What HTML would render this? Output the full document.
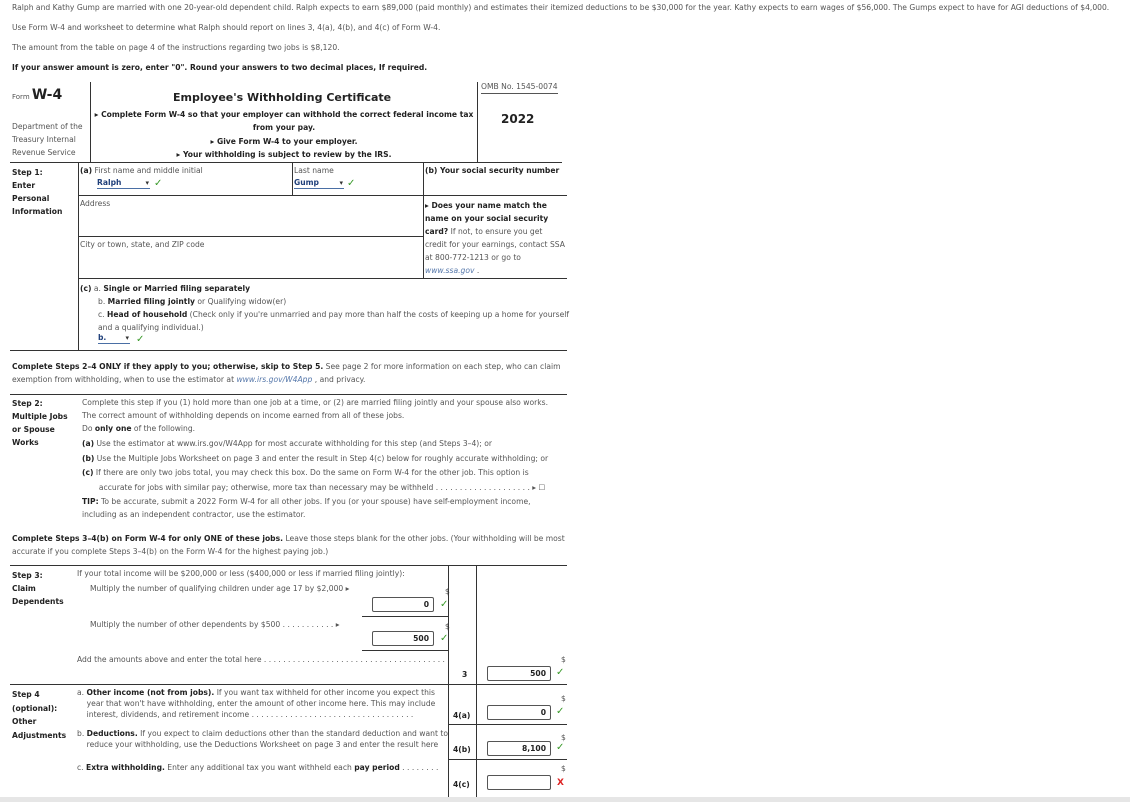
<!DOCTYPE html>
<html><head><meta charset="utf-8"><style>
*{margin:0;padding:0;box-sizing:border-box}
body{width:1130px;height:802px;background:#fff;position:relative;overflow:hidden;font-family:"DejaVu Sans","Liberation Sans",sans-serif;font-size:7.6px;color:#555}
.a{position:absolute;white-space:nowrap;line-height:10px}
b{color:#222}
.k{color:#222;font-weight:bold}
.h{position:absolute;height:1px;background:#333}
.v{position:absolute;width:1px;background:#333}
.lk{color:#5577aa;font-style:italic}
.sel{position:absolute;height:11px;border-bottom:1px solid #4a6fa5;color:#1f3f7a;font-weight:bold;font-size:7.6px;line-height:10px}
.sel:after{content:"▾";position:absolute;right:1px;top:0;font-size:7px;color:#333}
.ck{position:absolute;color:#3a9a2a;font-weight:bold;font-size:10px;line-height:10px}
.box{position:absolute;height:15px;border:1px solid #555;border-radius:2px;text-align:right;padding-right:4px;color:#222;font-weight:bold;line-height:13px}
</style></head><body>
<div class="a" style="left:12px;top:3px">Ralph and Kathy Gump are married with one 20-year-old dependent child. Ralph expects to earn $89,000 (paid monthly) and estimates their itemized deductions to be $30,000 for the year. Kathy expects to earn wages of $56,000. The Gumps expect to have for AGI deductions of $4,000.</div>
<div class="a" style="left:12px;top:23px">Use Form W-4 and worksheet to determine what Ralph should report on lines 3, 4(a), 4(b), and 4(c) of Form W-4.</div>
<div class="a" style="left:12px;top:43px">The amount from the table on page 4 of the instructions regarding two jobs is $8,120.</div>
<div class="a k" style="left:12px;top:63px">If your answer amount is zero, enter "0". Round your answers to two decimal places, If required.</div>

<div class="a" style="left:12px;top:90px;font-size:7px">Form <span style="font-size:14px;font-weight:bold;color:#222">W-4</span></div>
<div class="a" style="left:12px;top:122px">Department of the</div>
<div class="a" style="left:12px;top:135px">Treasury Internal</div>
<div class="a" style="left:12px;top:148px">Revenue Service</div>
<div class="v" style="left:90px;top:82px;height:81px"></div>
<div class="a k" style="left:173px;top:91px;font-size:11px;line-height:14px">Employee's Withholding Certificate</div>
<div class="a k" style="left:91px;top:108px;width:386px;text-align:center;line-height:13.3px">▸ Complete Form W-4 so that your employer can withhold the correct federal income tax<br>from your pay.<br>▸ Give Form W-4 to your employer.<br>▸ Your withholding is subject to review by the IRS.</div>
<div class="v" style="left:477px;top:82px;height:81px"></div>
<div class="a" style="left:481px;top:82px;border-bottom:1px solid #555;padding-bottom:1px">OMB No. 1545-0074</div>
<div class="a k" style="left:501px;top:112px;font-size:12px;line-height:14px">2022</div>
<div class="h" style="left:10px;top:162px;width:552px"></div>

<div class="a k" style="left:12px;top:166px;line-height:13px">Step 1:<br>Enter<br>Personal<br>Information</div>
<div class="v" style="left:78px;top:163px;height:188px"></div>
<div class="a" style="left:80px;top:166px"><b>(a)</b> First name and middle initial</div>
<div class="sel" style="left:97px;top:178px;width:53px">Ralph</div><div class="ck" style="left:154px;top:179px">✓</div>
<div class="v" style="left:292px;top:163px;height:33px"></div>
<div class="a" style="left:294px;top:166px">Last name</div>
<div class="sel" style="left:294px;top:178px;width:50px">Gump</div><div class="ck" style="left:347px;top:179px">✓</div>
<div class="v" style="left:423px;top:163px;height:116px"></div>
<div class="a k" style="left:425px;top:166px">(b) Your social security number</div>
<div class="h" style="left:78px;top:195px;width:489px"></div>
<div class="a" style="left:80px;top:199px">Address</div>
<div class="a" style="left:425px;top:199px;line-height:13px"><b>▸ Does your name match the</b><br><b>name on your social security</b><br><b>card?</b> If not, to ensure you get<br>credit for your earnings, contact SSA<br>at 800-772-1213 or go to<br><span class="lk">www.ssa.gov</span> .</div>
<div class="h" style="left:78px;top:236px;width:345px"></div>
<div class="a" style="left:80px;top:240px">City or town, state, and ZIP code</div>
<div class="h" style="left:78px;top:278px;width:489px"></div>
<div class="a" style="left:80px;top:282px;line-height:13px"><b>(c)</b> a. <b>Single or Married filing separately</b></div>
<div class="a" style="left:98px;top:295px;line-height:13px">b. <b>Married filing jointly</b> or Qualifying widow(er)<br>c. <b>Head of household</b> (Check only if you're unmarried and pay more than half the costs of keeping up a home for yourself<br>and a qualifying individual.)</div>
<div class="sel" style="left:98px;top:333px;width:32px">b.</div><div class="ck" style="left:136px;top:335px">✓</div>
<div class="h" style="left:10px;top:350px;width:557px"></div>

<div class="a" style="left:12px;top:360px;line-height:13px"><b>Complete Steps 2–4 ONLY if they apply to you; otherwise, skip to Step 5.</b> See page 2 for more information on each step, who can claim<br>exemption from withholding, when to use the estimator at <span class="lk">www.irs.gov/W4App</span> , and privacy.</div>
<div class="h" style="left:10px;top:394px;width:557px"></div>
<div class="a k" style="left:12px;top:397px;line-height:13px">Step 2:<br>Multiple Jobs<br>or Spouse<br>Works</div>
<div class="a" style="left:82px;top:396px;line-height:13px">Complete this step if you (1) hold more than one job at a time, or (2) are married filing jointly and your spouse also works.<br>The correct amount of withholding depends on income earned from all of these jobs.<br>Do <b>only one</b> of the following.</div>
<div class="a" style="left:82px;top:437px;line-height:14.6px"><b>(a)</b> Use the estimator at www.irs.gov/W4App for most accurate withholding for this step (and Steps 3–4); or<br><b>(b)</b> Use the Multiple Jobs Worksheet on page 3 and enter the result in Step 4(c) below for roughly accurate withholding; or<br><b>(c)</b> If there are only two jobs total, you may check this box. Do the same on Form W-4 for the other job. This option is<br>&nbsp;&nbsp;&nbsp;&nbsp;&nbsp;&nbsp;&nbsp;accurate for jobs with similar pay; otherwise, more tax than necessary may be withheld . . . . . . . . . . . . . . . . . . . . ▸ ☐</div>
<div class="a" style="left:82px;top:495px;line-height:13px"><b>TIP:</b> To be accurate, submit a 2022 Form W-4 for all other jobs. If you (or your spouse) have self-employment income,<br>including as an independent contractor, use the estimator.</div>
<div class="a" style="left:12px;top:532px;line-height:13px"><b>Complete Steps 3–4(b) on Form W-4 for only ONE of these jobs.</b> Leave those steps blank for the other jobs. (Your withholding will be most<br>accurate if you complete Steps 3–4(b) on the Form W-4 for the highest paying job.)</div>
<div class="h" style="left:10px;top:565px;width:557px"></div>

<div class="a k" style="left:12px;top:569px;line-height:13px">Step 3:<br>Claim<br>Dependents</div>
<div class="a" style="left:77px;top:569px">If your total income will be $200,000 or less ($400,000 or less if married filing jointly):</div>
<div class="a" style="left:90px;top:584px">Multiply the number of qualifying children under age 17 by $2,000 ▸</div>
<div class="a" style="left:445px;top:587px">$</div>
<div class="box" style="left:372px;top:597px;width:62px">0</div><div class="ck" style="left:440px;top:600px">✓</div>
<div class="h" style="left:362px;top:616px;width:86px"></div>
<div class="a" style="left:90px;top:620px">Multiply the number of other dependents by $500 . . . . . . . . . . . ▸</div>
<div class="a" style="left:445px;top:622px">$</div>
<div class="box" style="left:372px;top:631px;width:62px">500</div><div class="ck" style="left:440px;top:634px">✓</div>
<div class="h" style="left:362px;top:650px;width:86px"></div>
<div class="a" style="left:77px;top:655px">Add the amounts above and enter the total here . . . . . . . . . . . . . . . . . . . . . . . . . . . . . . . . . . . . . . .</div>
<div class="v" style="left:448px;top:566px;height:234px"></div>
<div class="v" style="left:476px;top:566px;height:234px"></div>
<div class="a k" style="left:462px;top:670px">3</div>
<div class="a" style="left:561px;top:655px">$</div>
<div class="box" style="left:487px;top:666px;width:64px">500</div><div class="ck" style="left:556px;top:668px">✓</div>
<div class="h" style="left:10px;top:684px;width:557px"></div>

<div class="a k" style="left:12px;top:688px;line-height:13.5px">Step 4<br>(optional):<br>Other<br>Adjustments</div>
<div class="a" style="left:77px;top:687px;line-height:11px">a. <b>Other income (not from jobs).</b> If you want tax withheld for other income you expect this<br>&nbsp;&nbsp;&nbsp;&nbsp;year that won't have withholding, enter the amount of other income here. This may include<br>&nbsp;&nbsp;&nbsp;&nbsp;interest, dividends, and retirement income . . . . . . . . . . . . . . . . . . . . . . . . . . . . . . . . . .</div>
<div class="a k" style="left:453px;top:711px">4(a)</div>
<div class="a" style="left:561px;top:694px">$</div>
<div class="box" style="left:487px;top:705px;width:64px">0</div><div class="ck" style="left:556px;top:707px">✓</div>
<div class="h" style="left:448px;top:724px;width:119px"></div>
<div class="a" style="left:77px;top:728px;line-height:11px">b. <b>Deductions.</b> If you expect to claim deductions other than the standard deduction and want to<br>&nbsp;&nbsp;&nbsp;&nbsp;reduce your withholding, use the Deductions Worksheet on page 3 and enter the result here</div>
<div class="a k" style="left:453px;top:745px">4(b)</div>
<div class="a" style="left:561px;top:733px">$</div>
<div class="box" style="left:487px;top:741px;width:64px">8,100</div><div class="ck" style="left:556px;top:743px">✓</div>
<div class="h" style="left:448px;top:759px;width:119px"></div>
<div class="a" style="left:77px;top:763px">c. <b>Extra withholding.</b> Enter any additional tax you want withheld each <b>pay period</b> . . . . . . . .</div>
<div class="a k" style="left:453px;top:780px">4(c)</div>
<div class="a" style="left:561px;top:764px">$</div>
<div class="box" style="left:487px;top:775px;width:64px"></div><div class="a" style="left:557px;top:778px;color:#d22;font-weight:bold;font-size:9px">X</div>
<div style="position:absolute;left:0;top:797px;width:1130px;height:5px;background:#e6e6e6"></div>
</body></html>
